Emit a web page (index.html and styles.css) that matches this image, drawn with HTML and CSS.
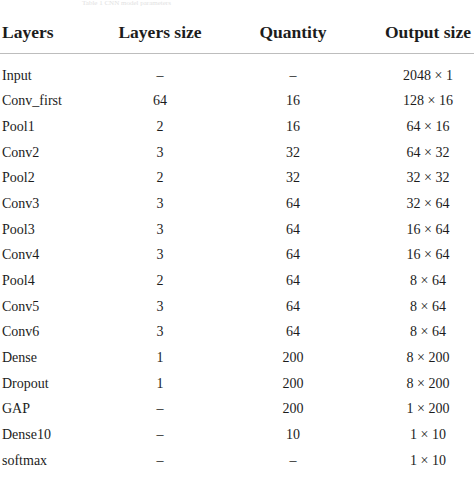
FILE: index.html
```html
<!DOCTYPE html>
<html>
<head>
<meta charset="utf-8">
<link rel="stylesheet" href="styles.css">
</head>
<body>
<div class="caption">Table 1 CNN model parameters</div>
<div class="table">
  <div class="row head">
    <div class="c1">Layers</div><div class="c2">Layers size</div><div class="c3">Quantity</div><div class="c4">Output size</div>
  </div>
  <div class="body">
    <div class="row"><div class="c1">Input</div><div class="c2">–</div><div class="c3">–</div><div class="c4">2048 × 1</div></div>
    <div class="row"><div class="c1">Conv_first</div><div class="c2">64</div><div class="c3">16</div><div class="c4">128 × 16</div></div>
    <div class="row"><div class="c1">Pool1</div><div class="c2">2</div><div class="c3">16</div><div class="c4">64 × 16</div></div>
    <div class="row"><div class="c1">Conv2</div><div class="c2">3</div><div class="c3">32</div><div class="c4">64 × 32</div></div>
    <div class="row"><div class="c1">Pool2</div><div class="c2">2</div><div class="c3">32</div><div class="c4">32 × 32</div></div>
    <div class="row"><div class="c1">Conv3</div><div class="c2">3</div><div class="c3">64</div><div class="c4">32 × 64</div></div>
    <div class="row"><div class="c1">Pool3</div><div class="c2">3</div><div class="c3">64</div><div class="c4">16 × 64</div></div>
    <div class="row"><div class="c1">Conv4</div><div class="c2">3</div><div class="c3">64</div><div class="c4">16 × 64</div></div>
    <div class="row"><div class="c1">Pool4</div><div class="c2">2</div><div class="c3">64</div><div class="c4">8 × 64</div></div>
    <div class="row"><div class="c1">Conv5</div><div class="c2">3</div><div class="c3">64</div><div class="c4">8 × 64</div></div>
    <div class="row"><div class="c1">Conv6</div><div class="c2">3</div><div class="c3">64</div><div class="c4">8 × 64</div></div>
    <div class="row"><div class="c1">Dense</div><div class="c2">1</div><div class="c3">200</div><div class="c4">8 × 200</div></div>
    <div class="row"><div class="c1">Dropout</div><div class="c2">1</div><div class="c3">200</div><div class="c4">8 × 200</div></div>
    <div class="row"><div class="c1">GAP</div><div class="c2">–</div><div class="c3">200</div><div class="c4">1 × 200</div></div>
    <div class="row"><div class="c1">Dense10</div><div class="c2">–</div><div class="c3">10</div><div class="c4">1 × 10</div></div>
    <div class="row"><div class="c1">softmax</div><div class="c2">–</div><div class="c3">–</div><div class="c4">1 × 10</div></div>
  </div>
</div>
</body>
</html>
```
FILE: styles.css
```css
html, body {
  margin: 0;
  padding: 0;
  background: #ffffff;
}
body {
  font-family: "Liberation Serif", "DejaVu Serif", serif;
  color: #1c1c1c;
  width: 474px;
  overflow: hidden;
}
.caption {
  height: 8px;
  padding-left: 82px;
  font-size: 7px;
  line-height: 7px;
  color: #e2e2e2;
  white-space: nowrap;
}
.row {
  display: grid;
  grid-template-columns: 105px 110px 156px 103px;
  align-items: center;
}
.head {
  height: 46px;
  font-weight: bold;
  font-size: 17.5px;
  border-bottom: 1.5px solid #bdbdbd;
  box-sizing: border-box;
  padding-top: 4px;
}
.body {
  padding-top: 9px;
}
.body .row {
  height: 25.67px;
  font-size: 14px;
}
.c1 {
  padding-left: 2px;
  text-align: left;
}
.c2, .c3 {
  text-align: center;
}
.c4 {
  text-align: center;
  padding-left: 11px;
}
```
